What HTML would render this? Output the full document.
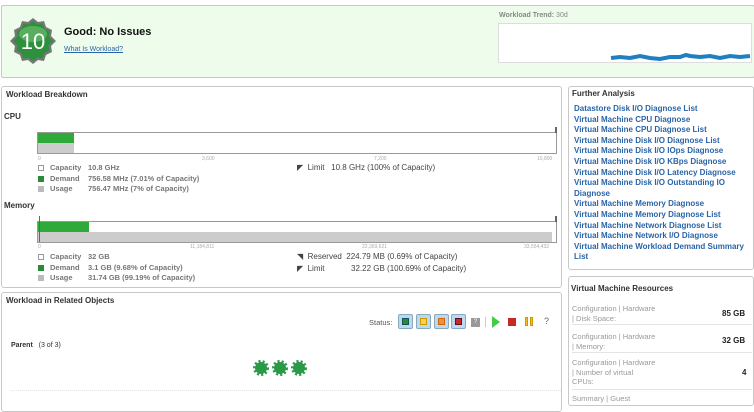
<!DOCTYPE html>
<html><head><meta charset="utf-8"><style>
*{box-sizing:border-box;margin:0;padding:0}
body{width:754px;height:400px;overflow:hidden;background:#fff;font-family:"Liberation Sans",Arial,sans-serif;font-size:8px;color:#333;position:relative}
.abs{position:absolute}
.panel{position:absolute;border:1px solid #c8c8c8;border-radius:3px;background:#fff}
.h{font-weight:bold;font-size:8px;color:#333}
.lnk{color:#2a64a8;font-weight:bold;font-size:8px;line-height:10.6px}
.bar{position:absolute;border:1px solid #999;background:#fff}
.tick{position:absolute;font-size:5px;color:#aaa}
.leg{position:absolute;font-size:7.5px;color:#777;font-weight:bold}
.leg2{position:absolute;font-size:8px;color:#444}
.sq{display:inline-block;width:6px;height:6px;margin-right:6px;vertical-align:-1px}
</style></head><body>
<div class="panel" style="left:1px;top:5px;width:754px;height:73px;background:#eefcec;border-radius:2px"></div>
<svg class="abs" style="left:8px;top:16px" width="50" height="50" viewBox="0 0 50 50">
<g transform="translate(25,25)">
<path fill="#777" d="M0-23 L5-19 11-20 13-14 19-11 18-5 23 0 18 5 19 11 13 14 11 20 5 19 0 23 -5 19 -11 20 -13 14 -19 11 -18 5 -23 0 -18 -5 -19 -11 -13 -14 -11 -20 -5 -19Z"/>
<path fill="#2e8f3c" d="M0-20 L4.5-16.5 9.5-17.5 11.5-12 16.5-9.5 15.5-4.5 20 0 15.5 4.5 16.5 9.5 11.5 12 9.5 17.5 4.5 16.5 0 20 -4.5 16.5 -9.5 17.5 -11.5 12 -16.5 9.5 -15.5 4.5 -20 0 -15.5 -4.5 -16.5 -9.5 -11.5 -12 -9.5 -17.5 -4.5 -16.5Z"/>
<ellipse cx="0" cy="-7" rx="14" ry="8" fill="#7fcf7f" opacity=".5"/>
</g>
<text x="25" y="33" text-anchor="middle" font-family="Liberation Sans,sans-serif" font-size="22" fill="#fff">10</text>
</svg>
<div class="abs" style="left:64px;top:26px;font-size:11px;font-weight:bold;color:#111">Good: No Issues</div>
<div class="abs" style="left:64px;top:46px;font-size:7px;color:#2a64a8;text-decoration:underline">What Is Workload?</div>
<div class="abs" style="left:499px;top:12px;font-size:7px;color:#888"><b>Workload Trend:</b> 30d</div>
<div class="abs" style="left:498px;top:23px;width:254px;height:40px;background:#fff;border:1px solid #ddd"></div>
<svg class="abs" style="left:610px;top:50px" width="142" height="12"><path d="M1 8 L10 7 20 8 30 6 40 8 50 9 60 7 70 7 76 5 80 6 90 7 100 6 110 8 120 6 130 7 140 6" stroke="#1f7fc0" stroke-width="4" fill="none"/></svg>

<div class="panel" style="left:1px;top:86px;width:561px;height:202px"></div>
<div class="abs h" style="left:6px;top:90px">Workload Breakdown</div>
<div class="abs h" style="left:4px;top:112px">CPU</div>
<div class="bar" style="left:37px;top:132px;width:520px;height:22px"></div>
<div class="abs" style="left:38px;top:133px;width:36px;height:10px;background:#2faa3a"></div>
<div class="abs" style="left:38px;top:143px;width:36px;height:10px;background:#ccc"></div>
<div class="abs" style="left:555px;top:127px;width:2px;height:6px;background:#666"></div>
<div class="tick" style="left:38px;top:156px">0</div><div class="tick" style="left:202px;top:156px">3,600</div><div class="tick" style="left:374px;top:156px">7,200</div><div class="tick" style="left:537px;top:156px">10,800</div>
<div class="leg" style="left:38px;top:163px"><span class="sq" style="border:1px solid #999"></span>Capacity</div><div class="leg" style="left:88px;top:163px">10.8 GHz</div>
<div class="leg" style="left:38px;top:174px"><span class="sq" style="background:#2a8a3a"></span>Demand</div><div class="leg" style="left:88px;top:174px">756.58 MHz (7.01% of Capacity)</div>
<div class="leg" style="left:38px;top:184px"><span class="sq" style="background:#bbb"></span>Usage</div><div class="leg" style="left:88px;top:184px">756.47 MHz (7% of Capacity)</div>
<div class="leg2" style="left:297px;top:163px">◤&nbsp; Limit &nbsp;&nbsp;10.8 GHz (100% of Capacity)</div>
<div class="abs h" style="left:4px;top:201px">Memory</div>
<div class="bar" style="left:37px;top:221px;width:520px;height:22px"></div>
<div class="abs" style="left:38px;top:222px;width:51px;height:10px;background:#2faa3a"></div>
<div class="abs" style="left:38px;top:232px;width:514px;height:10px;background:#ccc"></div>
<div class="abs" style="left:39px;top:216px;width:1px;height:26px;background:#666"></div>
<div class="abs" style="left:555px;top:216px;width:2px;height:6px;background:#666"></div>
<div class="tick" style="left:38px;top:244px">0</div><div class="tick" style="left:190px;top:244px">11,184,811</div><div class="tick" style="left:362px;top:244px">22,369,621</div><div class="tick" style="left:524px;top:244px">33,554,432</div>
<div class="leg" style="left:38px;top:252px"><span class="sq" style="border:1px solid #999"></span>Capacity</div><div class="leg" style="left:88px;top:252px">32 GB</div>
<div class="leg" style="left:38px;top:263px"><span class="sq" style="background:#2a8a3a"></span>Demand</div><div class="leg" style="left:88px;top:263px">3.1 GB (9.68% of Capacity)</div>
<div class="leg" style="left:38px;top:273px"><span class="sq" style="background:#bbb"></span>Usage</div><div class="leg" style="left:88px;top:273px">31.74 GB (99.19% of Capacity)</div>
<div class="leg2" style="left:297px;top:252px">◥&nbsp; Reserved &nbsp;224.79 MB (0.69% of Capacity)</div>
<div class="leg2" style="left:297px;top:264px">◤&nbsp; Limit</div><div class="leg2" style="left:351px;top:264px">32.22 GB (100.69% of Capacity)</div>

<div class="panel" style="left:1px;top:292px;width:561px;height:120px"></div>
<div class="abs h" style="left:6px;top:296px">Workload in Related Objects</div>
<div class="abs" style="left:369px;top:318px;font-size:7.5px;color:#555">Status:</div>
<div class="abs" style="left:398px;top:314px;width:15px;height:15px;border:1px solid #8ab;border-radius:2px;background:#bcd8f4"><div style="margin:3px;width:7px;height:7px;background:#2e8a2e;border:1px solid #155"></div></div>
<div class="abs" style="left:416px;top:314px;width:15px;height:15px;border:1px solid #8ab;border-radius:2px;background:#bcd8f4"><div style="margin:3px;width:7px;height:7px;background:#f6d44a;border:1px solid #c90"></div></div>
<div class="abs" style="left:434px;top:314px;width:15px;height:15px;border:1px solid #8ab;border-radius:2px;background:#bcd8f4"><div style="margin:3px;width:7px;height:7px;background:#f09040;border:1px solid #c60"></div></div>
<div class="abs" style="left:451px;top:314px;width:15px;height:15px;border:1px solid #8ab;border-radius:2px;background:#bcd8f4"><div style="margin:3px;width:7px;height:7px;background:#c82828;border:1px solid #611"></div></div>
<div class="abs" style="left:471px;top:318px;width:9px;height:9px;background:#999;color:#fff;font-size:6px;text-align:center;line-height:9px">?</div>
<div class="abs" style="left:485px;top:317px;width:1px;height:10px;background:#ccc"></div>
<div class="abs" style="left:492px;top:316px;width:0;height:0;border-left:8px solid #4c4;border-top:6px solid transparent;border-bottom:6px solid transparent"></div>
<div class="abs" style="left:508px;top:318px;width:8px;height:8px;background:#c82828"></div>
<div class="abs" style="left:525px;top:317px;width:3px;height:9px;background:#f3c420;border:1px solid #c90"></div><div class="abs" style="left:530px;top:317px;width:3px;height:9px;background:#f3c420;border:1px solid #c90"></div>
<div class="abs" style="left:544px;top:316px;font-size:9px;color:#666">?</div>
<div class="abs" style="left:11px;top:342px;font-size:7px"><b>Parent</b>&nbsp;&nbsp; (3 of 3)</div>
<svg class="abs" style="left:253px;top:360px" width="56" height="16"><g fill="#2a9a48"><circle cx="8" cy="8" r="6"/><circle cx="27" cy="8" r="6"/><circle cx="46" cy="8" r="6"/></g><g stroke="#2a9a48" stroke-width="3" stroke-dasharray="2 2"><circle cx="8" cy="8" r="6.5" fill="none"/><circle cx="27" cy="8" r="6.5" fill="none"/><circle cx="46" cy="8" r="6.5" fill="none"/></g></svg>
<div class="abs" style="left:11px;top:390px;width:550px;border-top:1px dotted #e4e4e4"></div>

<div class="panel" style="left:568px;top:86px;width:186px;height:184px"></div>
<div class="abs h" style="left:572px;top:89px">Further Analysis</div>
<div class="abs lnk" style="left:574px;top:104px;width:178px">Datastore Disk I/O Diagnose List<br>Virtual Machine CPU Diagnose<br>Virtual Machine CPU Diagnose List<br>Virtual Machine Disk I/O Diagnose List<br>Virtual Machine Disk I/O IOps Diagnose<br>Virtual Machine Disk I/O KBps Diagnose<br>Virtual Machine Disk I/O Latency Diagnose<br>Virtual Machine Disk I/O Outstanding IO Diagnose<br>Virtual Machine Memory Diagnose<br>Virtual Machine Memory Diagnose List<br>Virtual Machine Network Diagnose List<br>Virtual Machine Network I/O Diagnose<br>Virtual Machine Workload Demand Summary List</div>
<div class="panel" style="left:568px;top:276px;width:186px;height:130px"></div>
<div class="abs h" style="left:571px;top:284px">Virtual Machine Resources</div>
<div class="abs" style="left:572px;top:304px;font-size:7.5px;color:#999;line-height:9.5px">Configuration | Hardware<br>| Disk Space:</div><div class="abs" style="left:722px;top:309px;font-size:8px;font-weight:bold;color:#222">85 GB</div>
<div class="abs" style="left:572px;top:324px;width:180px;border-top:1px solid #e4e4e4"></div>
<div class="abs" style="left:572px;top:332px;font-size:7.5px;color:#999;line-height:9.5px">Configuration | Hardware<br>| Memory:</div><div class="abs" style="left:722px;top:336px;font-size:8px;font-weight:bold;color:#222">32 GB</div>
<div class="abs" style="left:572px;top:352px;width:180px;border-top:1px solid #e4e4e4"></div>
<div class="abs" style="left:572px;top:358px;font-size:7.5px;color:#999;line-height:9.5px">Configuration | Hardware<br>| Number of virtual<br>CPUs:</div><div class="abs" style="left:742px;top:368px;font-size:8px;font-weight:bold;color:#222">4</div>
<div class="abs" style="left:572px;top:389px;width:180px;border-top:1px solid #e4e4e4"></div>
<div class="abs" style="left:572px;top:394px;font-size:7.5px;color:#999">Summary | Guest</div>
</body></html>
